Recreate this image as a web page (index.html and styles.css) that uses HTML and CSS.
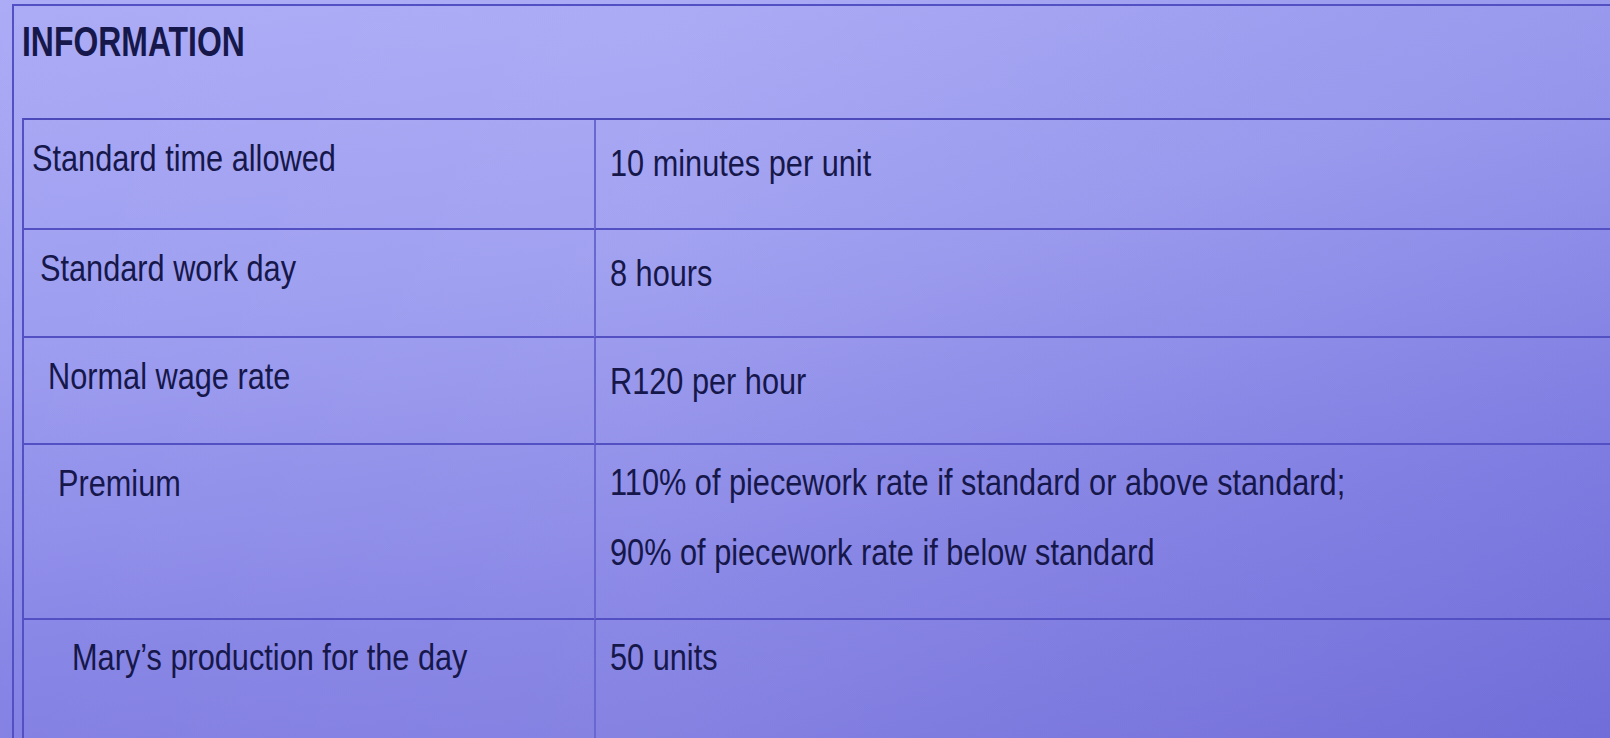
FILE: index.html
```html
<!DOCTYPE html>
<html>
<head>
<meta charset="utf-8">
<link rel="stylesheet" href="styles.css">
</head>
<body>
<div class="screen">
  <div class="panel">
    <div class="heading"><span class="hx">INFORMATION</span></div>
    <div class="table">
      <div class="cell label"><span class="sx">Standard time allowed</span></div>
      <div class="cell value"><span class="sx">10 minutes per unit</span></div>
      <div class="cell label"><span class="sx">Standard work day</span></div>
      <div class="cell value"><span class="sx">8 hours</span></div>
      <div class="cell label"><span class="sx">Normal wage rate</span></div>
      <div class="cell value"><span class="sx">R120 per hour</span></div>
      <div class="cell label"><span class="sx">Premium</span></div>
      <div class="cell value multi">
        <span class="sx">110% of piecework rate if standard or above standard;</span>
        <span class="sx">90% of piecework rate if below standard</span>
      </div>
      <div class="cell label"><span class="sx">Mary’s production for the day</span></div>
      <div class="cell value"><span class="sx">50 units</span></div>
    </div>
  </div>
</div>
</body>
</html>
```
FILE: styles.css
```css
html, body {
  margin: 0;
  padding: 0;
  width: 1610px;
  height: 738px;
  overflow: hidden;
}
body {
  background: linear-gradient(172deg, #a8a8f6 0%, #9a9af0 35%, #8280e4 70%, #7470dc 100%);
  font-family: "Liberation Sans", Arial, sans-serif;
  color: #16174a;
}
.screen {
  width: 1610px;
  height: 738px;
  background: linear-gradient(90deg, rgba(255,255,255,0.04) 0%, rgba(255,255,255,0.08) 40%, rgba(60,60,170,0.06) 100%);
  padding-top: 4px;
  padding-left: 12px;
  box-sizing: border-box;
}
.panel {
  border-top: 2px solid #5250c2;
  border-left: 2px solid #5250c2;
  height: 100%;
}
.heading {
  height: 112px;
  padding-left: 8px;
  padding-top: 12px;
  box-sizing: border-box;
  font-weight: bold;
  font-size: 42px;
  line-height: 48px;
}
.hx {
  display: inline-block;
  transform: scaleX(0.76);
  transform-origin: left center;
  white-space: nowrap;
}
.sx {
  display: inline-block;
  transform: scaleX(0.83);
  transform-origin: left center;
  white-space: nowrap;
}
.table {
  margin-left: 8px;
  border-top: 2px solid #4c4aba;
  border-left: 2px solid #5250c2;
  display: grid;
  grid-template-columns: 570px 1fr;
  grid-template-rows: 110px 108px 107px 175px 120px;
}
.cell {
  border-bottom: 2px solid #5250c2;
  padding: 17px 14px 0 8px;
  box-sizing: border-box;
  font-size: 37px;
  line-height: 44px;
}
.value {
  border-left: 2px solid #6a68d0;
  padding-left: 14px;
  padding-top: 22px;
}
.label:nth-of-type(3) { padding-left: 16px; }
.label:nth-of-type(5) { padding-left: 24px; }
.label:nth-of-type(7) { padding-left: 34px; }
.label:nth-of-type(9) { padding-left: 48px; }
.multi {
  display: flex;
  flex-direction: column;
  gap: 26px;
  padding-top: 16px;
}
.table .cell:nth-child(9), .table .cell:nth-child(10) {
  border-bottom: none;
  padding-top: 16px;
}
```
